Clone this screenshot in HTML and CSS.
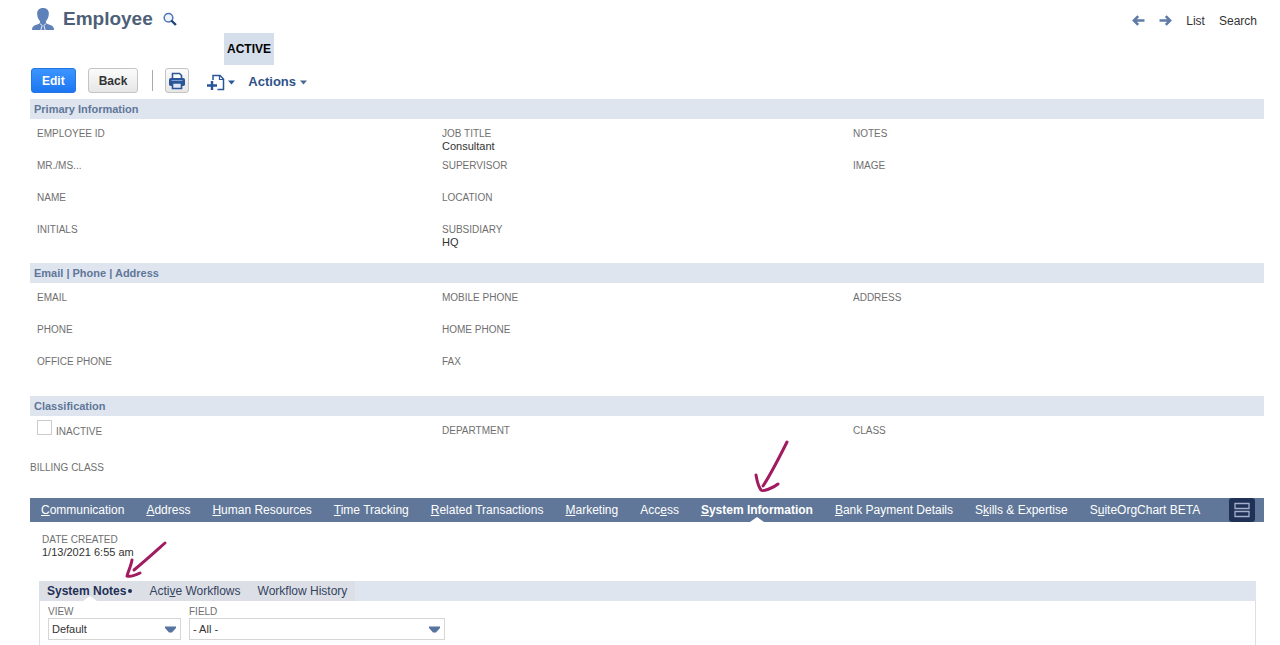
FILE: index.html
```html
<!DOCTYPE html>
<html lang="en">
<head>
<meta charset="utf-8">
<title>Employee</title>
<meta name="viewport" content="width=device-width, initial-scale=1">
<link rel="stylesheet" href="styles.css">
</head>
<body>
<div class="page">
  <header class="title-bar">
    <svg class="person" width="24" height="24" viewBox="0 0 24 24" aria-hidden="true">
      <path d="M12 1C8 1 5.800 3.500 6.200 7.500c.2 3 1.300 5 2.900 6.700 0 1.500-.3 2.200-1.600 2.700L4 18.200C2 19 1 20.500 1 23h22c0-2.500-1-4-3-4.800l-3.500-1.300c-1.300-.5-1.600-1.200-1.600-2.700 1.600-1.700 2.700-3.700 2.900-6.700C18.200 3.500 16 1 12 1z" fill="#5f81ba"/>
      <path d="M8.800 16.500l2.400 2-1.400 4.500M15.200 16.500l-2.400 2 1.400 4.500" fill="none" stroke="#e8eef8" stroke-width="1"/>
    </svg>
    <h1 class="title">Employee</h1>
    <button class="icon-button" type="button" aria-label="Find">
      <svg width="14" height="14" viewBox="0 0 14 14" aria-hidden="true">
        <circle cx="5.500" cy="5.700" r="4.300" fill="#eef4fc" stroke="#4d74b3" stroke-width="1.500"/>
        <path d="M8.800 9l3.500 3.300" stroke="#24457f" stroke-width="2.400" stroke-linecap="round"/>
      </svg>
    </button>
    <nav class="record-nav" aria-label="Records">
      <a href="#" aria-label="Previous"><svg width="13" height="11" viewBox="0 0 13 11"><path d="M6.200 1.200L1.900 5.500l4.300 4.300M2.500 5.500h10" fill="none" stroke="#607ba6" stroke-width="2.600"/></svg></a>
      <a href="#" aria-label="Next"><svg width="13" height="11" viewBox="0 0 13 11"><path d="M6.800 1.200l4.300 4.300-4.300 4.300M10.500 5.500H.5" fill="none" stroke="#607ba6" stroke-width="2.600"/></svg></a>
      <a class="nav-text" href="#">List</a>
      <a class="nav-text" href="#">Search</a>
    </nav>
  </header>

  <div class="status-row"><span class="status">ACTIVE</span></div>

  <div class="toolbar">
    <button class="btn btn-primary" type="button">Edit</button>
    <button class="btn" type="button">Back</button>
    <span class="divider"></span>
    <button class="btn btn-print" type="button" aria-label="Print">
      <svg width="18" height="18" viewBox="0 0 18 18" aria-hidden="true">
        <path d="M4.500 7V1.500h7l2 2V7" fill="#fff" stroke="#2a5698" stroke-width="1.600"/>
        <rect x="1" y="6" width="16" height="8" rx="1.800" fill="#2a5698"/>
        <path d="M3.500 8.500h11" stroke="#7fa0d0" stroke-width="1"/>
        <path d="M4.500 11h9v5.500h-9z" fill="#dce6f4" stroke="#2a5698" stroke-width="1.600"/>
      </svg>
    </button>
    <button class="icon-button new-menu" type="button" aria-label="New record">
      <svg width="18" height="17" viewBox="0 0 18 17" aria-hidden="true">
        <path d="M6 6V1.500h7l3.500 3.500v10.500H10.500" fill="none" stroke="#2a5698" stroke-width="1.500"/>
        <path d="M12.500 1.500V5.500h4" fill="none" stroke="#2a5698" stroke-width="1.200"/>
        <path d="M5 7v9M0 11.500h10" stroke="#2a5698" stroke-width="2.400"/>
      </svg>
      <svg width="7" height="5" viewBox="0 0 7 5" aria-hidden="true"><path d="M0 .5h7L3.500 4.500z" fill="#2a5698"/></svg>
    </button>
    <button class="icon-button actions" type="button">Actions
      <svg width="7" height="5" viewBox="0 0 7 5" aria-hidden="true"><path d="M0 .5h7L3.500 4.500z" fill="#4b6690"/></svg>
    </button>
  </div>

  <main class="main">
    <section>
      <h2 class="section-title">Primary Information</h2>
      <dl class="fields">
        <div class="column">
          <div class="field"><dt>EMPLOYEE ID</dt></div>
          <div class="field"><dt>MR./MS...</dt></div>
          <div class="field"><dt>NAME</dt></div>
          <div class="field"><dt>INITIALS</dt></div>
        </div>
        <div class="column">
          <div class="field"><dt>JOB TITLE</dt><dd>Consultant</dd></div>
          <div class="field"><dt>SUPERVISOR</dt></div>
          <div class="field"><dt>LOCATION</dt></div>
          <div class="field"><dt>SUBSIDIARY</dt><dd>HQ</dd></div>
        </div>
        <div class="column">
          <div class="field"><dt>NOTES</dt></div>
          <div class="field"><dt>IMAGE</dt></div>
        </div>
      </dl>
    </section>

    <section>
      <h2 class="section-title">Email | Phone | Address</h2>
      <dl class="fields">
        <div class="column">
          <div class="field"><dt>EMAIL</dt></div>
          <div class="field"><dt>PHONE</dt></div>
          <div class="field"><dt>OFFICE PHONE</dt></div>
        </div>
        <div class="column">
          <div class="field"><dt>MOBILE PHONE</dt></div>
          <div class="field"><dt>HOME PHONE</dt></div>
          <div class="field"><dt>FAX</dt></div>
        </div>
        <div class="column">
          <div class="field"><dt>ADDRESS</dt></div>
        </div>
      </dl>
    </section>

    <section>
      <h2 class="section-title">Classification</h2>
      <div class="fields classification">
        <label class="check"><input type="checkbox"> <span>INACTIVE</span></label>
        <div class="label">DEPARTMENT</div>
        <div class="label">CLASS</div>
      </div>
      <div class="label billing">BILLING CLASS</div>
    </section>
  </main>

  <nav class="tabs" aria-label="Record tabs">
    <a href="#"><u>C</u>ommunication</a>
    <a href="#"><u>A</u>ddress</a>
    <a href="#"><u>H</u>uman Resources</a>
    <a href="#"><u>T</u>ime Tracking</a>
    <a href="#"><u>R</u>elated Transactions</a>
    <a href="#"><u>M</u>arketing</a>
    <a href="#">Acc<u>e</u>ss</a>
    <a class="current" href="#" aria-current="page"><u>S</u>ystem Information
      <svg class="arrow arrow-tab" width="38" height="56" viewBox="0 0 38 56" aria-hidden="true"><path d="M35 4C28 18 19 36 11 48M4 37c1 6 2 11 5 15 2 2 12-2 17-6" fill="none" stroke="#a01b60" stroke-width="3" stroke-linecap="round" stroke-linejoin="round"/></svg>
    </a>
    <a href="#"><u>B</u>ank Payment Details</a>
    <a href="#">S<u>k</u>ills &amp; Expertise</a>
    <a href="#">S<u>u</u>iteOrgChart BETA</a>
    <button class="layout-toggle" type="button" aria-label="Toggle layout">
      <svg width="16" height="16" viewBox="0 0 16 16" aria-hidden="true"><path d="M1 1.500h14v5H1zM1 9.500h14v5H1z" fill="none" stroke="#a3b0c9" stroke-width="1.300"/></svg>
    </button>
  </nav>

  <div class="tab-body">
    <dl class="created">
      <dt>DATE CREATED</dt>
      <dd>1/13/2021 6:55 am</dd>
    </dl>
    <nav class="subtabs" aria-label="System information tabs">
      <div class="subtab-list">
        <a class="current" href="#" aria-current="page">System Notes<span class="dot"></span>
          <svg class="arrow arrow-subtab" width="46" height="42" viewBox="0 0 46 42" aria-hidden="true"><path d="M42 4C33 12 22 22 11 31M9 21C8 27 5 33 4 37c4 1 9-1 13-3" fill="none" stroke="#a01b60" stroke-width="3" stroke-linecap="round" stroke-linejoin="round"/></svg>
        </a>
        <a href="#">Acti<u>v</u>e Workflows</a>
        <a href="#">Workflow History</a>
      </div>
    </nav>
    <div class="filters">
      <div class="filter filter-view">
        <label for="view">VIEW</label>
        <div class="select-box">
          <select id="view"><option>Default</option></select>
          <svg width="11" height="7" viewBox="0 0 11 7" aria-hidden="true"><path d="M0 .5h11v1.500L7 6.500H4L0 2z" fill="#56749f"/></svg>
        </div>
      </div>
      <div class="filter filter-field">
        <label for="field">FIELD</label>
        <div class="select-box">
          <select id="field"><option>- All -</option></select>
          <svg width="11" height="7" viewBox="0 0 11 7" aria-hidden="true"><path d="M0 .5h11v1.500L7 6.500H4L0 2z" fill="#56749f"/></svg>
        </div>
      </div>
    </div>
  </div>
</div>
</body>
</html>
```

FILE: styles.css
```css
* { box-sizing: border-box; }

body {
  margin: 0;
  background: #fff;
  color: #333;
  font: 12px/16px "Liberation Sans", Arial, sans-serif;
}

h1, h2, dl, dd { margin: 0; }
a { color: inherit; text-decoration: none; }
svg { display: block; flex: none; }
button, select, input { font: inherit; color: inherit; }

.page {
  display: flex;
  flex-direction: column;
  min-height: 100vh;
  padding: 0 16px 0 30px;
}

/* Title */
.title-bar {
  display: flex;
  align-items: center;
  height: 33px;
  padding-top: 4px;
}
.person { margin: 0 8px 0 1px; }
.title {
  color: #4d5f79;
  font-size: 19px;
  line-height: 24px;
}
.icon-button {
  display: flex;
  align-items: center;
  padding: 0;
  border: 0;
  background: none;
}
.title + .icon-button { margin-left: 10px; }
.record-nav {
  display: flex;
  align-items: center;
  gap: 14px;
  margin-left: auto;
  padding: 4px 7px 0 0;
}

.status-row { display: flex; padding-left: 194px; }
.status {
  padding: 0 3px;
  background: #d5dfec;
  color: #000;
  font-weight: bold;
  line-height: 32px;
}

/* Toolbar */
.toolbar {
  display: flex;
  align-items: center;
  height: 34px;
  padding: 0 1px 3px;
}
.btn {
  height: 25px;
  padding: 0 10px;
  border: 1px solid #c4c4c4;
  border-radius: 3px;
  background: linear-gradient(#fbfbfb, #e6e6e6);
  color: #333;
  font-weight: bold;
}
.btn + .btn { margin-left: 12px; }
.btn-primary {
  border-color: #2277e2;
  background: linear-gradient(#3c95ff, #1c76f2);
  color: #fff;
}
.divider {
  width: 1px;
  height: 21px;
  margin: 0 12px 0 14px;
  background: #aaa;
}
.btn-print { padding: 0 2px; }
.new-menu { gap: 3px; margin: 3px 13px 0 18px; }
.actions {
  gap: 4px;
  margin-top: 3px;
  color: #2f5288;
  font-size: 13px;
  font-weight: bold;
}

/* Field groups */
.section-title {
  padding: 0 4px;
  background: #dfe5ef;
  color: #607799;
  font-size: 11px;
  line-height: 20px;
}
.fields {
  display: grid;
  grid-template-columns: 405fr 411fr 411fr;
  padding: 8px 0 8px 7px;
}
.main section:nth-child(2) .fields { padding-bottom: 9px; }
.field { height: 32px; }
dt, .label, .check, .filter label {
  color: #6f6f6f;
  font-size: 10px;
  line-height: 13px;
}
dd { font-size: 11px; line-height: 12px; }
.check { display: flex; align-items: flex-end; }
.check input {
  appearance: none;
  width: 15px;
  height: 15px;
  margin: 0 4px 3px 0;
  border: 1px solid #ccc;
  background: #fff;
}
.main .classification { padding: 4px 0 23px 7px; }
.classification .label { padding-top: 4px; }
.billing { padding-bottom: 24px; }

/* Record tabs */
.tabs {
  display: flex;
  align-items: center;
  gap: 22px;
  min-height: 24px;
  padding: 0 9px 0 11px;
  background: #607799;
  color: #fff;
  white-space: nowrap;
}
.tabs a { position: relative; line-height: 24px; }
.current { font-weight: bold; }
.tabs .current::after,
.subtabs .current::after {
  content: "";
  position: absolute;
  bottom: 0;
  left: 50%;
  margin-left: -7px;
  border: solid transparent;
  border-width: 0 7px 5px;
  border-bottom-color: #fff;
}
.layout-toggle {
  display: grid;
  place-items: center;
  width: 26px;
  height: 24px;
  margin-left: auto;
  padding: 0;
  border: 0;
  border-radius: 3px;
  background: #1f3157;
}
.arrow { position: absolute; pointer-events: none; }
.arrow-tab { left: 51px; bottom: 28px; }
.arrow-subtab { left: 76px; bottom: 20px; }

/* System information */
.tab-body {
  display: flex;
  flex: 1;
  flex-direction: column;
  padding: 11px 8px 0 9px;
}
.created { padding: 0 3px 23px; }
.created dt { line-height: 13px; }
.subtabs { display: flex; background: #dfe5ef; }
.subtab-list {
  display: flex;
  gap: 17px;
  padding: 0 8px;
  background: #dcdfe6;
  color: #34435e;
  white-space: nowrap;
}
.subtabs a { position: relative; line-height: 20px; }
.subtabs .current { display: flex; align-items: center; color: #1f3157; }
.dot {
  width: 4px;
  height: 4px;
  margin-left: 2px;
  border-radius: 50%;
  background: #1f3157;
}
.filters {
  display: flex;
  flex: 1;
  gap: 8px;
  padding: 4px 8px 5px;
  border: solid #dcdfe6;
  border-width: 0 1px;
}
.filter { display: flex; flex-direction: column; }
.filter-view { width: 133px; }
.filter-field { width: 256px; }
.select-box { display: flex; align-items: center; position: relative; }
.select-box select {
  appearance: none;
  width: 100%;
  height: 22px;
  padding: 0 20px 0 3px;
  border: 1px solid #d6d6d6;
  border-radius: 0;
  background: #fff;
  font-size: 11px;
}
.select-box svg { position: absolute; right: 5px; pointer-events: none; }
```
